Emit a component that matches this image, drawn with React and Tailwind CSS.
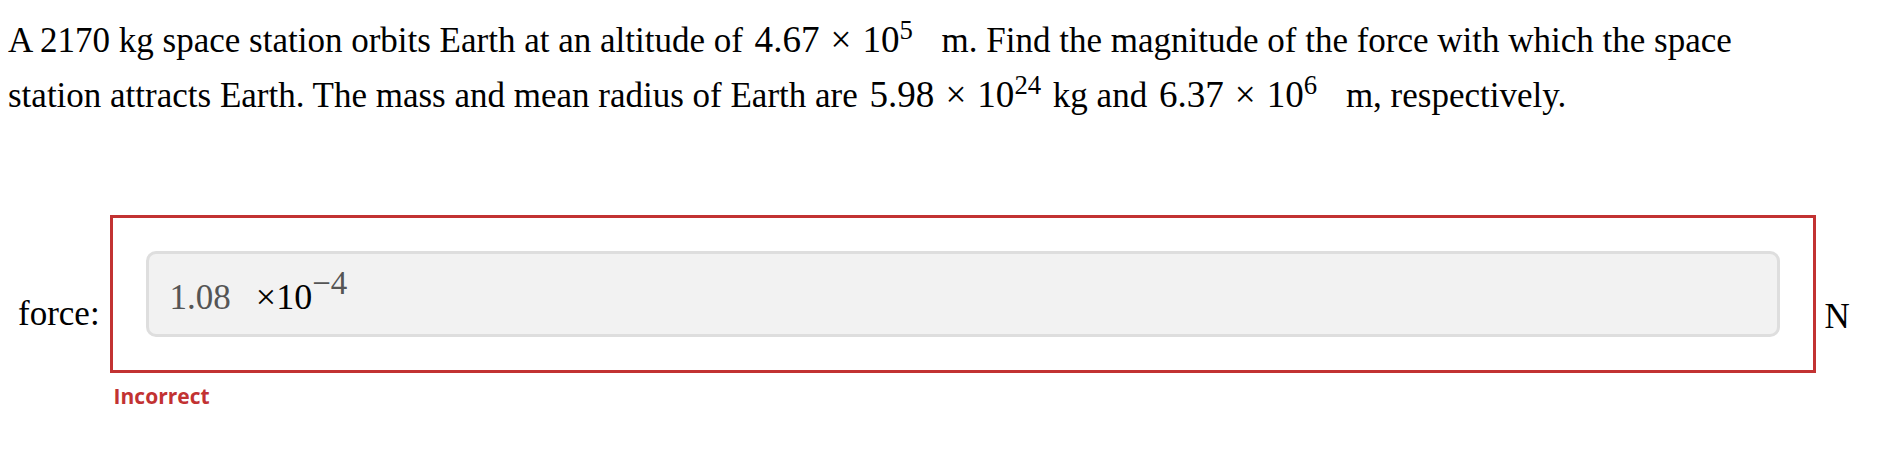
import React from 'react';

const serif = { fontFamily: '"Liberation Serif", "Times New Roman", serif' };

// scientific notation as it shows in the question text
const Sci = ({ mant, exp }) => (
  <span className={`ml-[3px] text-[1.06em] leading-none ${exp.length > 1 ? 'mr-[3px]' : 'mr-[20px]'}`}>
    {mant}
    <span className="mx-[11px]">×</span>
    10
    <sup className="text-[0.72em]">{exp}</sup>
  </span>
);

export default function App() {
  return (
    <div className="w-[1878px] h-[456px] bg-white pl-[8px]" style={serif}>
      <p className="pt-[13px] w-[1800px] text-[35px] leading-[55px] text-black">
        A 2170 kg space station orbits Earth at an altitude of <Sci mant="4.67" exp="5" /> m. Find the
        magnitude of the force with which the space station attracts Earth. The mass and mean radius of Earth
        are <Sci mant="5.98" exp="24" /> kg and <Sci mant="6.37" exp="6" /> m, respectively.
      </p>

      <div className="mt-[92px] flex items-start">
        <label className="ml-[10px] mt-[79px] text-[35px] leading-[40px] text-black">force:</label>

        <div className="ml-[10px] flex flex-col">
          <div className="w-[1706px] h-[158px] border-[3px] border-[#c23232] p-[33px]">
            <div className="h-full rounded-[10px] border-[3px] border-[#dedede] bg-[#f2f2f2] pl-[21px] flex items-center">
              <span className="text-[35px] leading-none text-[#555555] pt-[6px]">1.08</span>
              <span className="ml-[25px] text-[36px] leading-none text-black pt-[6px]">
                ×10
                <span className="relative -top-[15px] text-[33px] leading-none text-[#555555]">−4</span>
              </span>
            </div>
          </div>
          <div
            className="mt-[7px] ml-[4px] text-[21px] leading-[33px] font-bold text-[#c23232]"
            style={{ fontFamily: '"Open Sans", "Noto Sans", sans-serif' }}
          >
            Incorrect
          </div>
        </div>

        <span className="ml-[9px] mt-[82px] text-[35px] leading-[40px] text-black">N</span>
      </div>
    </div>
  );
}
